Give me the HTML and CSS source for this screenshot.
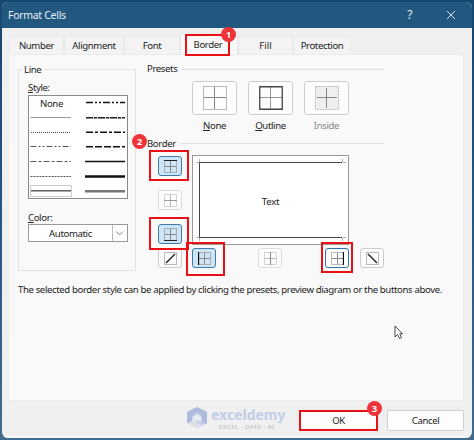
FILE: index.html
```html
<!DOCTYPE html>
<html lang="en">
<head>
<meta charset="utf-8">
<title>Format Cells</title>
<link rel="stylesheet" href="styles.css">
</head>
<body>
<svg class="defs" width="0" height="0" aria-hidden="true">
  <defs>
    <g id="grid" fill="none" stroke="#777"><path stroke-dasharray="1 1" d="M.5 .5H12.5V12.5H.5Z"/><path stroke="#888" d="M6.5 1V12M1 6.5H12"/></g>
    <g id="frame" fill="none" stroke="#777"><path stroke-dasharray="1 1" d="M.5 .5H12.5V12.5H.5Z"/></g>
  </defs>
</svg>
<div class="dialog">
  <header class="titlebar">
    <span class="title">Format Cells</span>
    <span class="help">?</span>
    <svg class="close" width="10" height="10" viewBox="0 0 10 10"><path d="M1 1L9 9M9 1L1 9" stroke="#d4e3ee" fill="none"/></svg>
  </header>
  <main class="content">
    <nav class="tabs">
      <div class="tab number"><span>Number</span></div>
      <div class="tab alignment"><span>Alignment</span></div>
      <div class="tab font"><span>Font</span></div>
      <div class="tab active"><span>Border</span><i class="mark"></i><b class="badge">1</b></div>
      <div class="tab fill"><span>Fill</span></div>
      <div class="tab protection"><span>Protection</span></div>
    </nav>
    <section class="panel">
      <div class="groups">
        <div class="line-group">
          <div class="legend">Line</div>
          <div class="label style-label"><u>S</u>tyle:</div>
          <div class="styles">
            <span class="none">None</span>
            <svg width="98" height="102" viewBox="0 0 98 102" fill="none">
              <g stroke="#777">
                <path stroke="#999" d="M1.5 21.5H42"/>
                <path stroke="#444" stroke-dasharray="1 1" d="M2 36.5H42"/>
                <path stroke="#555" stroke-dasharray="6 2 2 2 2 2" d="M1.5 50.5H42"/>
                <path stroke="#555" stroke-dasharray="6 2 3 2" d="M1.5 65.5H42"/>
                <path stroke="#555" stroke-dasharray="2 1" d="M1.5 80.5H42"/>
                <path stroke="#ccc" d="M1.5 89.5H42.5V100.5H1.5Z"/>
                <path stroke="#666" d="M2 94.5H42"/><path stroke="#aaa" d="M2 95.5H42"/>
              </g>
              <g stroke="#111" stroke-width="1.6">
                <path stroke-dasharray="7 2 2 2 2 2" d="M57 6.5H96"/>
                <path stroke-dasharray="7 1 3 1" d="M57 21.8H96"/><path stroke="#888" stroke-width=".7" d="M57 22.3H96"/>
                <path stroke-dasharray="7 2 3 2" d="M57 36.3H96"/>
                <path stroke-dasharray="7 2" d="M57 50.8H96"/>
                <path d="M56 65.5H96"/>
                <path stroke-width="2.4" d="M56 80.5H96"/>
                <path stroke="#777" stroke-width="2.4" d="M56 95.2H96"/>
              </g>
            </svg>
          </div>
          <div class="label color-label"><u>C</u>olor:</div>
          <div class="select"><span>Automatic</span><svg width="15" height="16" viewBox="0 0 15 16"><path d="M3.5 6.5L7 10L10.5 6.5" fill="none" stroke="#777"/></svg></div>
        </div>
        <div class="right">
          <div class="rule">Presets</div>
          <div class="presets">
            <div class="preset"><div class="tile"><svg width="24" height="24" viewBox="0 0 24 24" fill="none" stroke="#777"><path stroke-dasharray="1 1" d="M.5 .5H23.5V23.5H.5Z"/><path stroke="#888" d="M11.5 1V23M1 11.5H23"/></svg></div><span><u>N</u>one</span></div>
            <div class="preset"><div class="tile"><svg width="24" height="24" viewBox="0 0 24 24" fill="none" stroke="#999"><path d="M11.5 1V23M1 11.5H23"/><path stroke="#444" stroke-width="1.3" d="M.75 .75H23.25V23.25H.75Z"/></svg></div><span><u>O</u>utline</span></div>
            <div class="preset off"><div class="tile"><svg width="24" height="24" viewBox="0 0 24 24" fill="none"><path fill="#efefef" stroke="#bbb" stroke-dasharray="2 1" d="M.5 .5H23.5V23.5H.5Z"/><path stroke="#888" d="M11.5 2V22M2 11.5H22"/></svg></div><span>Inside</span></div>
          </div>
          <div class="rule border-rule"><span>Border</span><b class="badge">2</b></div>
          <div class="editor">
            <div class="side">
              <div class="tool on top"><svg width="13" height="13"><use href="#grid"/><path d="M0 .5H13" stroke="#222"/></svg><i class="mark"></i></div>
              <div class="tool off"><svg width="13" height="13"><use href="#grid" opacity=".6"/><path d="M0 6.5H13" stroke="#999"/></svg></div>
              <div class="tool on bottom"><svg width="13" height="13"><use href="#grid"/><path d="M0 12.5H13" stroke="#222"/></svg><i class="mark"></i></div>
            </div>
            <div class="preview"><span>Text</span>
              <svg width="155" height="87" viewBox="0 0 155 87" fill="none"><path stroke="#aaa" d="M3 6.5H6M6.5 3V6M3 81.5H6M6.5 82V85M149.5 3V6M150 6.5H153M149.5 82V85M150 81.5H153"/><path stroke="#444" d="M149 6.5H6.5V81.5H149"/></svg>
            </div>
          </div>
          <div class="bottom-tools">
            <div class="tool"><svg width="13" height="13"><use href="#frame"/><path d="M2 11L11 2" stroke="#222" stroke-width="1.4"/></svg></div>
            <div class="tool on left"><svg width="13" height="13"><use href="#grid"/><path d="M.5 0V13" stroke="#111" stroke-width="1.3"/></svg><i class="mark"></i></div>
            <div class="tool off middle"><svg width="13" height="13"><use href="#grid" opacity=".6"/><path d="M6.5 0V13" stroke="#888"/></svg></div>
            <div class="tool focus right-edge"><svg width="13" height="13"><use href="#grid"/><path d="M12.5 0V13" stroke="#111" stroke-width="1.3"/></svg><i class="mark"></i></div>
            <div class="tool diagonal"><svg width="13" height="13"><use href="#frame"/><path d="M2 2L11 11" stroke="#222" stroke-width="1.4"/></svg></div>
          </div>
        </div>
      </div>
      <p class="hint">The selected border style can be applied by clicking the presets, preview diagram or the buttons above.</p>
      <svg class="cursor" width="10" height="16" viewBox="0 0 10 16"><path d="M1 1V12L3.5 9.5L5.5 13.5L7.5 12.5L5.7 8.8H8.5Z" fill="#fff" stroke="#333" stroke-width=".9"/></svg>
    </section>
    <footer class="footer">
      <div class="brand">
        <svg width="21" height="22" viewBox="0 0 21 22"><path fill="#c5cfe9" d="M10 0L20 5V16L10 21L0 16V5Z"/><path fill="#dcdfe6" d="M0 16L6 12L15 19L10 21Z"/><path fill="#adbbdc" d="M10 0L20 5V17L15 15V9L10 5L5 9V14L0 16V5Z"/><path fill="#e8ebf1" d="M10 7L14 10V15L10 13L6 15V10Z"/></svg>
        <div><strong>exceldemy</strong><small>EXCEL · DATA · BI</small></div>
      </div>
      <div class="button ok"><span>OK</span><i class="mark"></i><b class="badge">3</b></div>
      <div class="button cancel"><span>Cancel</span></div>
    </footer>
  </main>
</div>
</body>
</html>
```
FILE: styles.css
```css
* { box-sizing: border-box; }
body {
  margin: 0;
  width: 474px;
  height: 440px;
  padding: 2px;
  overflow: hidden;
  background: linear-gradient(#17466e, #265780 50%, #426b90);
  font: 9.6px/14px "Noto Sans", "Open Sans", sans-serif;
  letter-spacing: -.38px;
  color: #222;
}
.defs { position: absolute; }
svg { display: block; flex: none; }
u { text-underline-offset: 1px; text-decoration-thickness: 1px; }
.dialog { width: 470px; height: 436px; border-radius: 6px; overflow: hidden; background: #f0f0f0; }
.titlebar { height: 26px; display: flex; align-items: center; background: #22577f; color: #e8f1f7; padding: 0 16px 0 6px; }
.title { flex: 1; font-size: 10.5px; letter-spacing: -.3px; }
.help { font-size: 12px; margin-right: 34px; }
.content { height: 410px; padding: 5px 8px 0 7px; border: solid #f8f8f8; border-width: 0 0 2px; }
.tabs { display: flex; align-items: flex-end; height: 21px; }
.tab { height: 18px; display: flex; align-items: center; justify-content: center; background: #f3f3f3; border: 1px solid #e9e9e9; border-bottom: 0; position: relative; }
.number { width: 55px; }
.alignment { width: 60px; }
.font { width: 56px; }
.active { width: 58px; height: 21px; background: #f9f9f9; padding: 2px 2px 0 0; }
.fill { width: 55px; letter-spacing: 0; }
.protection { width: 58px; }
.mark { position: absolute; z-index: 1; border: 2px solid #e91116; }
.badge { position: absolute; z-index: 2; width: 15px; height: 15px; border-radius: 50%; background: #ee3439; color: #fff; text-align: center; font-size: 9px; letter-spacing: 0; line-height: 15px; }
.active .mark { left: 4px; top: 0; width: 45px; height: 22px; }
.active .badge { left: 40px; top: -7px; }
.panel { height: 347px; background: #f9f9f9; border: 1px solid #ececec; border-left-color: #faf4ef; padding: 14px 0 0 8px; position: relative; }
.groups { display: flex; gap: 11px; height: 202px; }
.line-group { width: 118px; height: 202px; border: 1px solid #e2e2e2; padding-left: 9px; }
.legend { width: fit-content; margin: -7px 0 0 -5px; padding: 0 3px 0 1px; background: #f9f9f9; }
.style-label { margin-top: 4px; }
.styles { width: 100px; height: 104px; border: 1px solid #8a8a8a; background: #fff; position: relative; }
.none { position: absolute; left: 11px; top: 1px; }
.color-label { margin: 12px 0 -1px; }
.select { width: 100px; height: 18px; display: flex; align-items: center; border: 1px solid #999; background: #fff; }
.select span { width: 83px; padding-top: 1px; text-align: center; }
.select svg { border-left: 1px solid #bbb; }
.right { width: 237px; margin-top: -7px; }
.rule { display: flex; align-items: center; gap: 4px; height: 14px; position: relative; }
.rule::after { content: ""; flex: 1; height: 1px; background: #e0e0e0; }
.presets { display: flex; gap: 11px; margin: 5px 0 0 45px; height: 55px; }
.preset { width: 45px; text-align: center; }
.preset span { display: block; margin-top: 4px; }
.preset.off { color: #888; }
.tile { height: 34px; display: flex; align-items: center; justify-content: center; border: 1px solid #ccc; border-radius: 3px; background: #fdfdfd; }
.border-rule span { padding-top: 2px; }
.border-rule .badge { left: -15px; top: -2px; }
.editor { display: flex; gap: 10px; padding: 5px 0 0 11px; }
.side { display: flex; flex-direction: column; gap: 14px; padding-top: 1px; }
.tool { width: 24px; height: 20px; border: 1px solid #ccc; border-radius: 3px; background: #fcfcfc; display: flex; align-items: center; justify-content: center; position: relative; flex: none; }
.tool.off { border-color: #ddd; }
.tool.on { background: #cfe5f6; border-color: #3c7cae; }
.tool.focus { background: #fff; border-color: #2d73aa; }
.preview { width: 157px; height: 90px; background: #fff; border: 1px solid #999; display: flex; align-items: center; justify-content: center; position: relative; }
.preview span { margin-top: 3px; letter-spacing: -.2px; }
.preview svg { position: absolute; left: 0; top: 0; }
.bottom-tools { display: flex; padding: 3px 0 0 11px; }
.left { margin-left: 10px; }
.middle { margin-left: 42px; }
.right-edge { margin-left: 43px; }
.diagonal { margin-left: 11px; }
.top .mark { left: -10px; top: -7px; width: 40px; height: 31px; }
.bottom .mark { left: -10px; top: -8px; width: 40px; height: 33px; }
.left .mark { left: -7px; top: -7px; width: 39px; height: 34px; }
.right-edge .mark { left: -5px; top: -7px; width: 32px; height: 31px; }
.hint { margin: 12px 0 0; white-space: nowrap; }
.cursor { position: absolute; left: 384px; top: 270px; }
.footer { display: flex; height: 38px; }
.brand { display: flex; gap: 3px; width: 112px; margin-left: 178px; padding-top: 6px; }
.brand div { padding-top: 1px; }
.brand strong { display: block; color: #c3cde8; font: 700 14px/14px "Noto Sans", sans-serif; letter-spacing: 0; }
.brand small { display: block; margin: 2px 0 0 8px; color: #c4c6cc; font-size: 6px; line-height: 6px; font-weight: 600; letter-spacing: .45px; white-space: nowrap; }
.button { height: 21px; margin-top: 9px; padding-top: 1px; border: 1px solid #d0d0d0; border-radius: 2px; background: #fdfdfd; display: flex; align-items: center; justify-content: center; position: relative; }
.ok { width: 79px; }
.ok .mark { inset: -1px; }
.ok .badge { right: -5px; top: -10px; }
.cancel { width: 77px; margin-left: 9px; }
```
